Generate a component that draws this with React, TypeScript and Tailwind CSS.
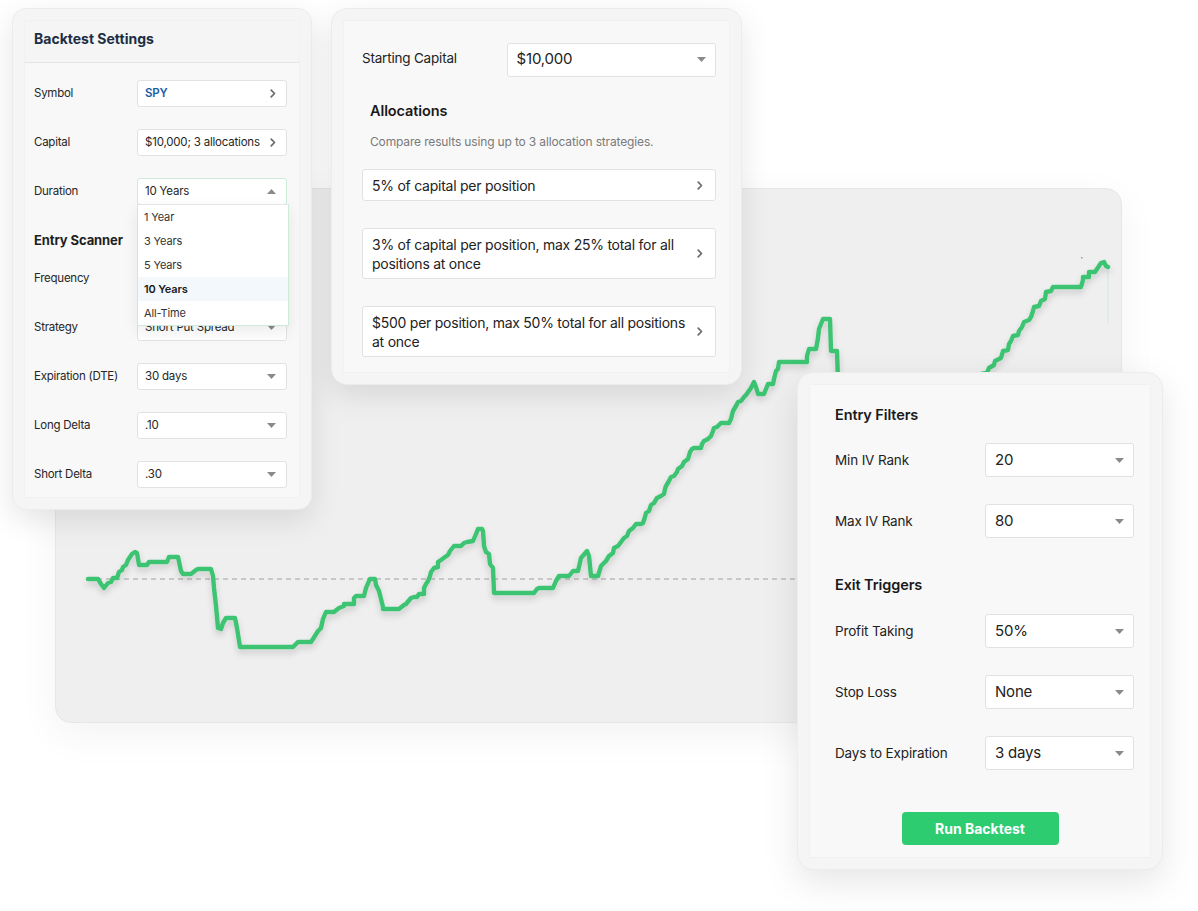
import React from 'react';

const LINE_A = [
  [87, 578], [97, 578], [100, 583], [103, 587], [107, 582], [110, 581], [112, 577], [116, 577], [118, 571], [121, 569], [122, 566], [125, 564],
  [127, 559], [131, 553], [134, 551], [136, 552], [138, 564], [146, 564], [148, 561], [166, 561], [168, 556], [177, 556], [180, 570], [182, 573],
  [190, 573], [195, 569], [197, 568], [210, 568], [212, 575], [213, 587], [215, 605], [217, 627], [220, 628], [222, 622], [225, 617], [234, 617],
  [236, 627], [239, 646], [292, 646], [296, 642], [297, 641], [310, 641], [312, 638], [317, 630], [320, 627], [322, 618], [325, 611], [333, 611],
  [338, 607], [343, 605], [343, 603], [353, 603], [353, 597], [355, 595], [363, 595], [365, 587], [368, 580], [369, 578], [374, 578], [375, 584],
  [378, 590], [382, 606], [382, 608], [398, 608], [403, 604], [405, 603], [410, 597], [413, 596], [416, 596], [418, 593], [423, 593], [423, 587],
  [425, 583], [427, 580], [429, 575], [430, 571], [433, 567], [437, 566], [437, 561], [440, 559], [444, 556], [447, 554], [449, 550], [453, 545],
  [460, 545], [463, 542], [466, 541], [472, 540], [475, 533], [477, 528], [481, 528], [482, 530], [483, 545], [485, 551], [488, 553], [489, 563],
  [492, 567], [493, 592], [533, 592], [536, 588], [538, 587], [552, 587], [555, 580], [558, 575], [568, 575], [572, 570], [577, 570], [580, 557],
  [586, 550], [588, 555], [590, 575], [597, 575], [600, 565], [602, 563], [605, 560], [608, 555], [612, 552], [613, 547], [617, 545], [620, 541],
  [623, 537], [626, 535], [628, 530], [632, 527], [635, 523], [640, 523], [642, 522], [644, 516], [645, 512], [648, 510], [650, 504], [653, 502],
  [656, 497], [660, 495], [663, 493], [664, 488], [665, 485], [668, 480], [670, 476], [673, 475], [676, 471], [677, 468], [681, 465], [683, 461],
  [687, 458], [689, 451], [691, 448], [693, 447], [700, 447], [701, 443], [703, 440], [707, 438], [710, 435], [712, 430], [713, 427], [716, 426],
  [720, 422], [728, 422], [730, 418], [732, 410], [735, 405], [737, 401], [740, 400], [743, 396], [745, 394], [750, 387], [753, 381], [755, 386],
  [757, 393], [763, 393], [765, 388], [767, 383], [772, 383], [773, 378], [775, 370], [777, 368], [778, 361], [806, 361], [806, 355], [808, 348],
  [815, 348], [817, 337], [818, 328], [822, 318], [829, 318], [830, 350], [836, 350], [837, 380], [860, 420], [930, 420], [960, 390],
  [980, 373], [986, 372], [988, 367], [993, 364], [994, 360], [1000, 357], [1002, 350], [1007, 349], [1008, 343], [1010, 340], [1012, 335],
  [1017, 334], [1018, 330], [1021, 326], [1023, 321], [1028, 319], [1030, 316], [1032, 310], [1033, 306], [1038, 305], [1040, 300], [1044, 298],
  [1045, 291], [1050, 290], [1052, 286], [1080, 286], [1082, 279], [1082, 276], [1088, 276], [1088, 271], [1094, 271], [1096, 268], [1100, 262],
  [1103, 261], [1105, 265], [1107, 266],
];

const pts = LINE_A.map((p) => p.join(',')).join(' ');

function Caret({ up = false }: { up?: boolean }) {
  return (
    <svg width="9" height="5" viewBox="0 0 9 5" className="shrink-0">
      {up ? <path d="M0 5 L4.5 0 L9 5 Z" fill="#8a8a8a" /> : <path d="M0 0 L9 0 L4.5 5 Z" fill="#8a8a8a" />}
    </svg>
  );
}

function Chevron() {
  return (
    <svg width="6" height="9" viewBox="0 0 6 9" className="shrink-0">
      <path d="M1.2 1.2 L4.5 4.5 L1.2 7.8" fill="none" stroke="#6b6b6b" strokeWidth="1.7" strokeLinecap="round" strokeLinejoin="round" />
    </svg>
  );
}

function SmallRow({ label, children, className = 'mt-[22px]' }: { label: string; children: React.ReactNode; className?: string }) {
  return (
    <div className={`relative flex items-center h-[27px] pl-[9px] ${className}`}>
      <span className="w-[103px] text-[11.5px] tracking-[-0.25px] text-[#262626]">{label}</span>
      {children}
    </div>
  );
}

function SmallBox({ value, kind = 'caret', blue = false, green = false }: { value: string; kind?: 'caret' | 'chev' | 'up'; blue?: boolean; green?: boolean }) {
  return (
    <div
      className={`w-[150px] h-[27px] bg-white rounded-[3px] border flex items-center justify-between pl-[7px] pr-[10px] text-[11.5px] tracking-[-0.2px] ${
        green ? 'border-[#cdebd8]' : 'border-[#e2e2e2]'
      } ${blue ? 'text-[#1c5ea6] font-semibold' : 'text-[#262626]'}`}
    >
      <span>{value}</span>
      {kind === 'chev' ? <Chevron /> : <Caret up={kind === 'up'} />}
    </div>
  );
}

function BigSelect({ value, w = 'w-[149px]' }: { value: string; w?: string }) {
  return (
    <div className={`${w} h-[34px] bg-white border border-[#e2e2e2] rounded-[3px] flex items-center justify-between pl-[9px] pr-[9px] text-[15px] tracking-[-0.2px] text-[#222]`}>
      <span>{value}</span>
      <Caret />
    </div>
  );
}

function AllocBox({ text, h }: { text: string; h: string }) {
  return (
    <div className={`${h} bg-white border border-[#e2e2e2] rounded-[3px] flex items-center justify-between pl-[9px] pr-[12px] text-[14px] tracking-[-0.25px] leading-[19px] text-[#222]`}>
      <span className="max-w-[330px]">{text}</span>
      <Chevron />
    </div>
  );
}

function RightRow({ label, value, className }: { label: string; value: string; className: string }) {
  return (
    <div className={`flex items-center h-[34px] ${className}`}>
      <span className="w-[150px] text-[13.5px] tracking-[-0.15px] text-[#222]">{label}</span>
      <BigSelect value={value} />
    </div>
  );
}

export default function App() {
  return (
    <div className="relative w-[1198px] h-[911px] overflow-hidden bg-white font-['Inter','Liberation_Sans',sans-serif]">
      {/* chart panel */}
      <div className="absolute left-[55px] top-[188px] w-[1067px] h-[535px] rounded-[16px] bg-[#efefef] border border-[#e7e7e7] shadow-[0_12px_40px_rgba(0,0,0,0.05)] overflow-hidden">
        <svg className="absolute inset-0" width="1067" height="535" viewBox="55 188 1067 535">
          <defs>
            <filter id="sh" x="-10%" y="-10%" width="120%" height="130%">
              <feDropShadow dx="0" dy="4" stdDeviation="3" floodColor="#000" floodOpacity="0.16" />
            </filter>
          </defs>
          <line x1="87" y1="578" x2="1100" y2="578" stroke="#bcbcbc" strokeWidth="1.5" strokeDasharray="5 4" />
          <line x1="1107" y1="266" x2="1107" y2="322" stroke="#cfe9d8" strokeWidth="1" />
          <rect x="1080" y="256" width="1.5" height="1.5" fill="#999" />
          <polyline points={pts} fill="none" stroke="#3dc473" strokeWidth="4.4" strokeLinejoin="round" strokeLinecap="round" filter="url(#sh)" />
        </svg>
      </div>

      {/* Backtest Settings card */}
      <div className="absolute left-[12px] top-[8px] w-[300px] h-[502px] p-[11px] rounded-[14px] bg-[#f5f5f5] border border-[#ececec] shadow-[0_10px_30px_rgba(0,0,0,0.10)]">
        <div className="h-full bg-[#f8f8f8] border border-[#f1f1f1]">
          <div className="h-[42px] flex items-center pb-[6px] pl-[9px] border-b border-[#e4e4e4] bg-[#f5f5f5]">
            <span className="text-[14px] font-bold text-[#1d2d44]">Backtest Settings</span>
          </div>
          <SmallRow label="Symbol" className="mt-[17px]">
            <SmallBox value="SPY" kind="chev" blue />
          </SmallRow>
          <SmallRow label="Capital">
            <SmallBox value="$10,000; 3 allocations" kind="chev" />
          </SmallRow>
          <SmallRow label="Duration">
            <SmallBox value="10 Years" kind="up" green />
            <div className="absolute left-[112px] top-[26px] z-10 w-[152px] bg-white border border-[#cdebd8] border-t-[#e6e6e6] shadow-[0_6px_14px_rgba(0,0,0,0.08)] text-[11px] tracking-[-0.15px] text-[#333]">
              {['1 Year', '3 Years', '5 Years', '10 Years', 'All-Time'].map((o) => (
                <div
                  key={o}
                  className={`h-[24px] flex items-center pl-[6px] ${o === '10 Years' ? 'bg-[#f3f8fc] font-semibold text-[#1a1a1a]' : ''}`}
                >
                  {o}
                </div>
              ))}
            </div>
          </SmallRow>
          <div className="h-[24px] mt-[24px] flex items-center pl-[9px]">
            <span className="text-[13px] font-bold tracking-[-0.1px] text-[#1f1f1f]">Entry Scanner</span>
          </div>
          <SmallRow label="Frequency" className="mt-[12px]">
            <SmallBox value="" />
          </SmallRow>
          <SmallRow label="Strategy">
            <SmallBox value="Short Put Spread" />
          </SmallRow>
          <SmallRow label="Expiration (DTE)">
            <SmallBox value="30 days" />
          </SmallRow>
          <SmallRow label="Long Delta">
            <SmallBox value=".10" />
          </SmallRow>
          <SmallRow label="Short Delta">
            <SmallBox value=".30" />
          </SmallRow>
        </div>
      </div>

      {/* Allocations card */}
      <div className="absolute left-[331px] top-[8px] w-[411px] h-[377px] p-[11px] rounded-[16px] bg-[#f5f5f5] border border-[#ececec] shadow-[0_10px_30px_rgba(0,0,0,0.10)]">
        <div className="h-full bg-[#f8f8f8] border border-[#f1f1f1] pl-[18px] pr-[13px] pt-[22px]">
          <div className="flex items-center h-[33px]">
            <span className="w-[145px] text-[13.5px] tracking-[-0.2px] text-[#222] pb-[3px]">Starting Capital</span>
            <BigSelect value="$10,000" w="w-[210px]" />
          </div>
          <div className="pl-[8px] mt-[23px] text-[14.5px] font-semibold tracking-[-0.1px] text-[#1a1a1a] leading-[24px]">Allocations</div>
          <div className="pl-[8px] mt-[10px] text-[12px] tracking-[-0.15px] text-[#7a7a7a] leading-[18px]">Compare results using up to 3 allocation strategies.</div>
          <div className="flex flex-col gap-[27px] mt-[18px]">
            <AllocBox h="h-[32px]" text="5% of capital per position" />
            <AllocBox h="h-[51px]" text="3% of capital per position, max 25% total for all positions at once" />
            <AllocBox h="h-[51px]" text="$500 per position, max 50% total for all positions at once" />
          </div>
        </div>
      </div>

      {/* Entry filters card */}
      <div className="absolute left-[797px] top-[372px] w-[366px] h-[498px] p-[11px] rounded-[16px] bg-[#f5f5f5] border border-[#ececec] shadow-[0_12px_36px_rgba(0,0,0,0.10)]">
        <div className="h-full bg-[#f8f8f8] border border-[#f1f1f1] pl-[25px] pr-[15px] pt-[18px] flex flex-col">
          <div className="h-[24px] flex items-center text-[14.5px] font-semibold tracking-[-0.1px] text-[#1a1a1a]">Entry Filters</div>
          <RightRow label="Min IV Rank" value="20" className="mt-[16px]" />
          <RightRow label="Max IV Rank" value="80" className="mt-[27px]" />
          <div className="h-[24px] mt-[35px] flex items-center text-[14.5px] font-semibold tracking-[-0.1px] text-[#1a1a1a]">Exit Triggers</div>
          <RightRow label="Profit Taking" value="50%" className="mt-[17px]" />
          <RightRow label="Stop Loss" value="None" className="mt-[27px]" />
          <RightRow label="Days to Expiration" value="3 days" className="mt-[27px]" />
          <div className="flex justify-center mt-[42px] pr-[10px]">
            <button className="w-[157px] h-[33px] rounded-[4px] bg-[#2ecc71] text-white text-[14px] font-bold">Run Backtest</button>
          </div>
        </div>
      </div>
    </div>
  );
}
